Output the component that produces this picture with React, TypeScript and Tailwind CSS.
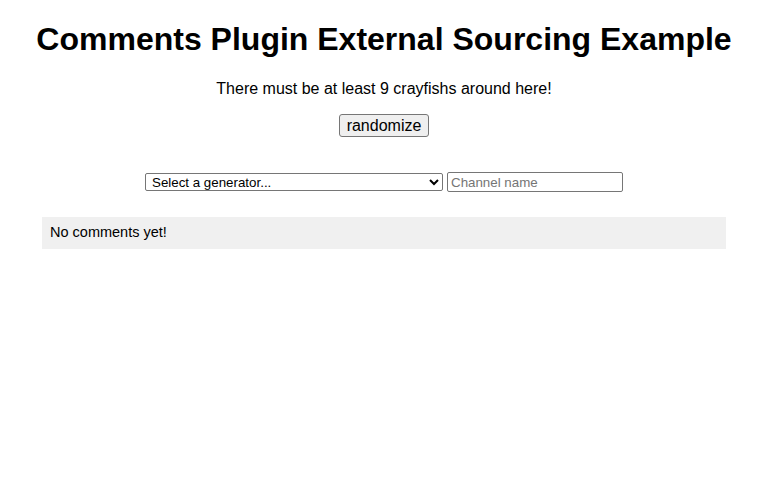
import React, { useState } from 'react';

const App: React.FC = () => {
  const [count, setCount] = useState(9);
  const [channel, setChannel] = useState('');

  return (
    <div className="min-h-[480px] bg-white text-black font-['Liberation_Sans',Arial,sans-serif]">
      <h1 className="pt-[21px] text-center text-[32px] leading-[37px] font-bold">
        Comments Plugin External Sourcing Example
      </h1>
      <p className="mt-[22px] text-center text-base leading-[18px]">
        There must be at least {count} crayfishs around here!
      </p>
      <div className="mt-[16px] flex justify-center">
        <button
          className="h-[23px] px-[7px] text-base leading-[18px] bg-[#efefef] border border-[#767676] rounded-[3px]"
          onClick={() => setCount(Math.floor(Math.random() * 20) + 1)}
        >
          randomize
        </button>
      </div>
      <div className="mt-[35px] flex justify-center items-center gap-[4px]">
        <select className="w-[298px] h-[18px] text-[13.33px] leading-[16px] border border-[#767676] rounded-[2px] bg-white pl-[2px]">
          <option>Select a generator...</option>
        </select>
        <input
          className="w-[176px] h-[20px] px-[3px] text-[13.33px] border border-[#767676] rounded-[2px] placeholder:text-[#757575]"
          placeholder="Channel name"
          value={channel}
          onChange={(e) => setChannel(e.target.value)}
        />
      </div>
      <div className="mx-[42px] mt-[25px] h-[32px] flex items-center px-[8px] bg-[#f0f0f0] text-[14.5px]">
        No comments yet!
      </div>
    </div>
  );
};

export default App;
